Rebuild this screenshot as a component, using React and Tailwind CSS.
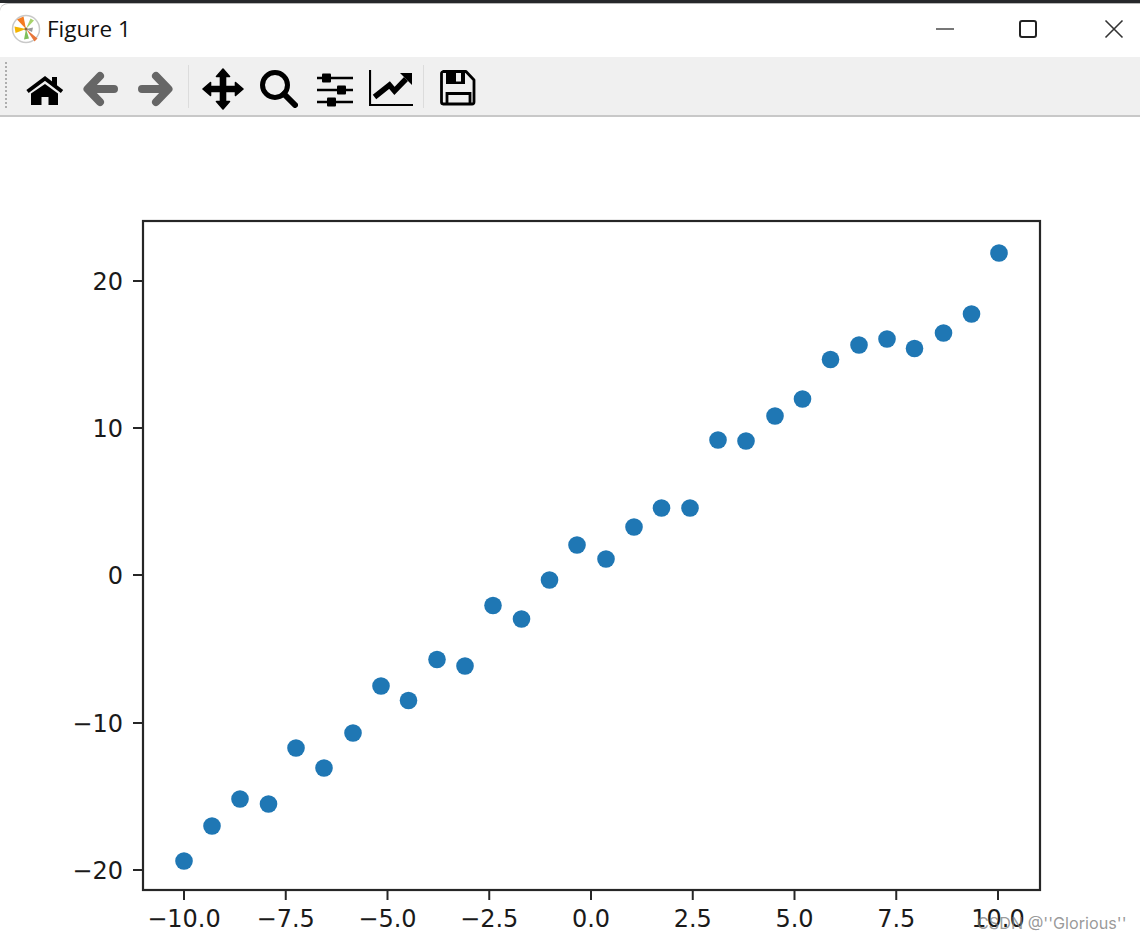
const points = [[184,861],[212,826],[240,799],[268.5,804],[296,748],[324,768],[353,733],[381,686],[408.5,700.5],[437,659.5],[465,666],[493,605.5],[521.5,619],[549.5,580],[577,545],[606,559],[634,527],[661.5,508],[690,508],[718,440],[746,441],[775,416],[802.5,399],[830.5,359.5],[859,345],[887,339],[914.5,348.5],[943.5,333],[971.5,314],[999,253]];
const xTicks = [[184,"−10.0"],[285.75,"−7.5"],[387.5,"−5.0"],[489.25,"−2.5"],[591,"0.0"],[692.75,"2.5"],[794.5,"5.0"],[896.25,"7.5"],[998,"10.0"]];
const yTicks = [[281,"20"],[428,"10"],[575,"0"],[723,"−10"],[870,"−20"]];

function Logo() {
  return (
    <svg width="30" height="30" viewBox="0 0 30 30" className="shrink-0">
      <circle cx="15" cy="15" r="13.5" fill="#fff" stroke="#c9c9c9" strokeWidth="1.5" />
      <path d="M15 15L6 5.5L12.5 2.5Z" fill="#f47b20" />
      <path d="M15 15L3.5 12.5L4.5 19Z" fill="#f4b400" />
      <path d="M15 15L19.5 4.5L23 6.5Z" fill="#a7d26b" />
      <path d="M15 15L23.5 27.5L26.5 24.5Z" fill="#e8763a" />
      <path d="M15 15L13 25.5L18 24.5Z" fill="#7fbf5a" />
      <path d="M15 15L21 18L22 13.5Z" fill="#9a9a9a" />
      <circle cx="15" cy="15" r="1.6" fill="#8a6a40" />
    </svg>
  );
}

function Home() {
  return (
    <svg width="40" height="32" viewBox="0 0 40 32" className="shrink-0">
      <path d="M27 1H32V11L27 8Z" fill="#000" />
      <path d="M2.5 15.5L20 2.5L37 15.5" fill="none" stroke="#000" strokeWidth="3.8" />
      <path d="M6 17.5L20 8L33 17.5V29H23.5V21H16.5V29H6Z" fill="#000" />
    </svg>
  );
}

function ArrowLeft({ flip }) {
  return (
    <svg width="35" height="36" viewBox="0 0 35 36" className="shrink-0">
      <g transform={flip ? "matrix(-1 0 0 1 35 0)" : undefined}>
        <path d="M17 5L4.5 18L17 31M5 18H31" fill="none" stroke="#666" strokeWidth="8" strokeLinecap="round" strokeLinejoin="round" />
      </g>
    </svg>
  );
}

function Move() {
  return (
    <svg width="42" height="42" viewBox="0 0 42 42" className="shrink-0">
      <path d="M21 1L27.5 8.5H23.5V18.5H33.5V14.5L41 21L33.5 27.5V23.5H23.5V33.5H27.5L21 41L14.5 33.5H18.5V23.5H8.5V27.5L1 21L8.5 14.5V18.5H18.5V8.5H14.5Z" fill="#000" stroke="#000" strokeWidth="1.6" strokeLinejoin="round" />
    </svg>
  );
}

function Search() {
  return (
    <svg width="38" height="38" viewBox="0 0 38 38" className="shrink-0">
      <circle cx="15" cy="15" r="12.5" fill="none" stroke="#000" strokeWidth="5" />
      <path d="M24 24L35 35" stroke="#000" strokeWidth="6" strokeLinecap="round" />
    </svg>
  );
}

function Sliders() {
  return (
    <svg width="36" height="36" viewBox="0 0 36 36" className="shrink-0">
      <path d="M0 6H36M0 18H36M0 30H36" stroke="#000" strokeWidth="2.5" />
      <rect x="5" y="1.5" width="9" height="9" rx="1" fill="#000" />
      <rect x="20" y="13.5" width="9" height="9" rx="1" fill="#000" />
      <rect x="10" y="25.5" width="9" height="9" rx="1" fill="#000" />
    </svg>
  );
}

function LineChart() {
  return (
    <svg width="44" height="37" viewBox="0 0 44 37" className="shrink-0">
      <path d="M1 0V35H44" fill="none" stroke="#000" strokeWidth="2.2" />
      <path d="M5.5 27L20.5 15L25.5 21L37 9" fill="none" stroke="#000" strokeWidth="5.5" strokeLinejoin="miter" />
      <path d="M31 3H43V15Z" fill="#000" />
    </svg>
  );
}

function Save() {
  return (
    <svg width="36" height="36" viewBox="0 0 36 36" className="shrink-0">
      <path d="M3 1.5H26L34 10V32A2 2 0 0 1 32 34H3A2 2 0 0 1 1.5 32V3A2 2 0 0 1 3 1.5Z" fill="none" stroke="#000" strokeWidth="2.8" strokeLinejoin="round" />
      <path d="M6 2H25V14H6Z" fill="#000" />
      <rect x="16" y="3" width="5" height="8.5" fill="#f0f0f0" />
      <path d="M7 33V23.5H30V33" fill="none" stroke="#000" strokeWidth="2.8" />
    </svg>
  );
}

function Sep({ className }) {
  return <div className={"w-px h-[43px] bg-[#dcdcdc] shrink-0 " + className} />;
}

export default function App() {
  return (
    <div className="relative w-[1140px] h-[939px] overflow-hidden bg-white font-['Open_Sans',sans-serif]">
      <div className="h-[3px] bg-[#26282b]" />
      <div className="h-[54px] bg-white border-t border-[#b8b8b8] rounded-tl-lg flex items-center pl-[11px] pb-[3px]">
        <Logo />
        <span className="ml-[6px] text-[22.5px] leading-none text-[#111]">Figure 1</span>
        <div className="ml-auto flex items-center h-full">
          <div className="w-[18px] h-0.5 bg-[#777]" />
          <div className="ml-[65px] w-[18px] h-[18px] rounded-[3px] border-2 border-[#222]" />
          <svg width="20" height="20" viewBox="0 0 20 20" className="ml-[67px] mr-[16px] shrink-0">
            <path d="M1.5 1.5L18.5 18.5M18.5 1.5L1.5 18.5" stroke="#333" strokeWidth="1.6" />
          </svg>
        </div>
      </div>
      <div className="h-[60px] bg-[#f0f0f0] border-b-2 border-[#c8c8c8] flex items-start pl-[5px]">
        <div className="w-[2px] h-[46px] border-l-2 border-dotted border-[#aeaeae] shrink-0 mt-[5px]" />
        <div className="ml-[18px] mt-[19px]"><Home /></div>
        <div className="ml-[18px] mt-[14px]"><ArrowLeft /></div>
        <div className="ml-[20px] mt-[14px]"><ArrowLeft flip /></div>
        <Sep className="ml-[15px] mt-[8px]" />
        <div className="ml-[13px] mt-[11px]"><Move /></div>
        <div className="ml-[16px] mt-[13px]"><Search /></div>
        <div className="ml-[19px] mt-[15px]"><Sliders /></div>
        <div className="ml-[16px] mt-[13px]"><LineChart /></div>
        <Sep className="ml-[10px] mt-[8px]" />
        <div className="ml-[16px] mt-[13px]"><Save /></div>
      </div>
      <svg width="1140" height="822" viewBox="0 117 1140 822" className="block font-['DejaVu_Sans',sans-serif]">
        <rect x="143" y="221" width="897" height="669" fill="none" stroke="#262626" strokeWidth="2.2" />
        {xTicks.map(([x, t]) => (
          <g key={t}>
            <path d={`M${x} 890V900`} stroke="#262626" strokeWidth="2" />
            <text x={x} y="927" textAnchor="middle" fontSize="24" fill="#1a1a1a">{t}</text>
          </g>
        ))}
        {yTicks.map(([y, t]) => (
          <g key={t}>
            <path d={`M133 ${y}H143`} stroke="#262626" strokeWidth="2" />
            <text x="123" y={y + 8.5} textAnchor="end" fontSize="24" fill="#1a1a1a">{t}</text>
          </g>
        ))}
        {points.map(([x, y]) => (
          <circle key={x} cx={x} cy={y} r="8.8" fill="#1f77b4" />
        ))}
      </svg>
      <span className="absolute left-[977px] top-[912px] whitespace-nowrap text-[16.2px] leading-[22px] text-[#808080]/80 font-['Inter',sans-serif]">CSDN @''Glorious''</span>
    </div>
  );
}
